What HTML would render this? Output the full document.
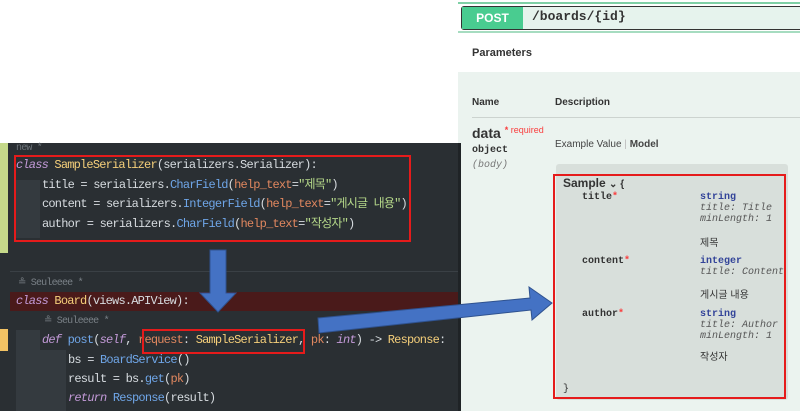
<!DOCTYPE html><html><head><meta charset="utf-8"><style>
body{margin:0;width:800px;height:411px;overflow:hidden;background:#fff;position:relative;font-family:"Liberation Sans","Noto Sans CJK KR",sans-serif}
.a{position:absolute;white-space:nowrap}
.code{font-family:"Liberation Mono","Noto Sans CJK KR",monospace;font-size:12px;letter-spacing:-0.8px;line-height:16px;color:#d7dce0}
.k{color:#c39ad8;font-style:italic}.y{color:#f5cf7a}.b{color:#6fa6e8}.o{color:#e0875f}.s{color:#b6d98a}
.m{font-family:"Liberation Mono",monospace;font-size:10px;line-height:12px}
</style></head><body>
<div class="a" style="left:0;top:143px;width:460px;height:268px;background:#2a2f33"></div>
<div class="a" style="left:0;top:143px;width:8px;height:110px;background:#c5d98a"></div>
<div class="a" style="left:0;top:329px;width:8px;height:22px;background:#f2c264"></div>
<div class="a" style="left:16px;top:180px;width:24px;height:58px;background:#343a3f"></div>
<div class="a" style="left:16px;top:330px;width:24px;height:81px;background:#343a3f"></div>
<div class="a" style="left:40px;top:350px;width:26px;height:61px;background:#343a3f"></div>
<div class="a" style="left:10px;top:271px;width:450px;height:1px;background:#3a4045"></div>
<div class="a" style="left:10px;top:292px;width:450px;height:19px;background:#4a1a1a"></div>
<div class="a code" style="left:16px;top:141px;color:#6b7278;font-size:10px">new *</div>
<div class="a code" style="left:16px;top:157px"><span class="k">class</span> <span class="y">SampleSerializer</span>(serializers.Serializer):</div>
<div class="a code" style="left:42px;top:177px">title = serializers.<span class="b">CharField</span>(<span class="o">help_text</span>=<span class="s">"제목"</span>)</div>
<div class="a code" style="left:42px;top:196px">content = serializers.<span class="b">IntegerField</span>(<span class="o">help_text</span>=<span class="s">"게시글 내용"</span>)</div>
<div class="a code" style="left:42px;top:216px">author = serializers.<span class="b">CharField</span>(<span class="o">help_text</span>=<span class="s">"작성자"</span>)</div>
<div class="a code" style="left:18px;top:276px;color:#7a8187;font-size:10px">≗ Seuleeee *</div>
<div class="a code" style="left:16px;top:293px"><span class="k">class</span> <span class="y">Board</span>(views.APIView):</div>
<div class="a code" style="left:44px;top:314px;color:#7a8187;font-size:10px">≗ Seuleeee *</div>
<div class="a code" style="left:42px;top:332px"><span class="k">def</span> <span class="b">post</span>(<span class="k">self</span>, <span class="o">request</span>: <span class="y">SampleSerializer</span>, <span class="o">pk</span>: <span class="k">int</span>) -&gt; <span class="y">Response</span>:</div>
<div class="a code" style="left:68px;top:352px">bs = <span class="b">BoardService</span>()</div>
<div class="a code" style="left:68px;top:371px">result = bs.<span class="b">get</span>(<span class="o">pk</span>)</div>
<div class="a code" style="left:68px;top:390px"><span class="k">return</span> <span class="b">Response</span>(result)</div>
<div class="a" style="left:14px;top:155px;width:393px;height:83px;border:2px solid #e51b1b"></div>
<div class="a" style="left:142px;top:329px;width:159px;height:21px;border:2px solid #e51b1b"></div>
<div class="a" style="left:458px;top:0;width:342px;height:411px;background:#ebf3ef"></div>
<div class="a" style="left:458px;top:0;width:342px;height:72px;background:#fff"></div>
<div class="a" style="left:458px;top:2px;width:342px;height:2px;background:#7fd0a6"></div>
<div class="a" style="left:461px;top:6px;width:345px;height:22px;background:#e6f3ed;border:1px solid #333;border-radius:3px"></div>
<div class="a" style="left:462px;top:7px;width:61px;height:22px;background:#49cc90;color:#fff;font-weight:bold;font-size:12px;line-height:22px;text-align:center">POST</div>
<div class="a" style="left:532px;top:9px;font-family:'Liberation Mono',monospace;font-weight:bold;font-size:13px;color:#333">/boards/{id}</div>
<div class="a" style="left:458px;top:31px;width:342px;height:2px;background:#a6dcc0"></div>
<div class="a" style="left:472px;top:47px;font-size:11px;font-weight:bold;color:#333">Parameters</div>
<div class="a" style="left:472px;top:97px;font-size:10px;font-weight:bold;color:#333">Name</div>
<div class="a" style="left:555px;top:97px;font-size:10px;font-weight:bold;color:#333">Description</div>
<div class="a" style="left:472px;top:117px;width:328px;height:1px;background:#ccd3cf"></div>
<div class="a" style="left:472px;top:125px;font-size:14px;font-weight:bold;color:#333">data <span style="color:#f93e3e;font-size:9px;vertical-align:top">* <span style="font-weight:normal">required</span></span></div>
<div class="a m" style="left:472px;top:145px;font-weight:bold;color:#333">object</div>
<div class="a m" style="left:472px;top:160px;font-style:italic;color:#777">(body)</div>
<div class="a" style="left:555px;top:139px;font-size:10px;color:#444">Example Value <span style="color:#bbb">|</span> <b>Model</b></div>
<div class="a" style="left:556px;top:164px;width:232px;height:236px;background:#d8dfdb;border-radius:3px"></div>
<div class="a" style="left:553px;top:174px;width:229px;height:221px;border:2px solid #e51b1b"></div>
<div class="a" style="left:563px;top:176px;font-size:12px;line-height:14px;font-weight:bold;color:#333">Sample <span style="font-size:10px">⌄ {</span></div>
<div class="a m" style="left:582px;top:192px;font-weight:bold;color:#333">title<span style="color:#f93e3e">*</span></div>
<div class="a m" style="left:700px;top:192px;color:#334499;font-weight:bold">string</div>
<div class="a m" style="left:700px;top:203px;font-style:italic;color:#555">title: Title</div>
<div class="a m" style="left:700px;top:214px;font-style:italic;color:#555">minLength: 1</div>
<div class="a" style="left:700px;top:234px;font-size:10px;color:#333">제목</div>
<div class="a m" style="left:582px;top:256px;font-weight:bold;color:#333">content<span style="color:#f93e3e">*</span></div>
<div class="a m" style="left:700px;top:256px;color:#334499;font-weight:bold">integer</div>
<div class="a m" style="left:700px;top:267px;font-style:italic;color:#555">title: Content</div>
<div class="a" style="left:700px;top:286px;font-size:10px;color:#333">게시글 내용</div>
<div class="a m" style="left:582px;top:309px;font-weight:bold;color:#333">author<span style="color:#f93e3e">*</span></div>
<div class="a m" style="left:700px;top:309px;color:#334499;font-weight:bold">string</div>
<div class="a m" style="left:700px;top:320px;font-style:italic;color:#555">title: Author</div>
<div class="a m" style="left:700px;top:331px;font-style:italic;color:#555">minLength: 1</div>
<div class="a" style="left:700px;top:348px;font-size:10px;color:#333">작성자</div>
<div class="a m" style="left:563px;top:384px;color:#333">}</div>
<div class="a" style="left:458px;top:143px;width:3px;height:268px;background:#1f2326"></div>
<svg class="a" style="left:0;top:0" width="800" height="411">
<polygon points="210,250 226,250 226,293 236,293 218,312 200,293 210,293" fill="#4472c4" stroke="#2f528f" stroke-width="1"/>
<polygon points="318,318 530,298 529,287 552,303 532,320 531,310 319,333" fill="#4472c4" stroke="#2f528f" stroke-width="1"/>
</svg>
</body></html>
